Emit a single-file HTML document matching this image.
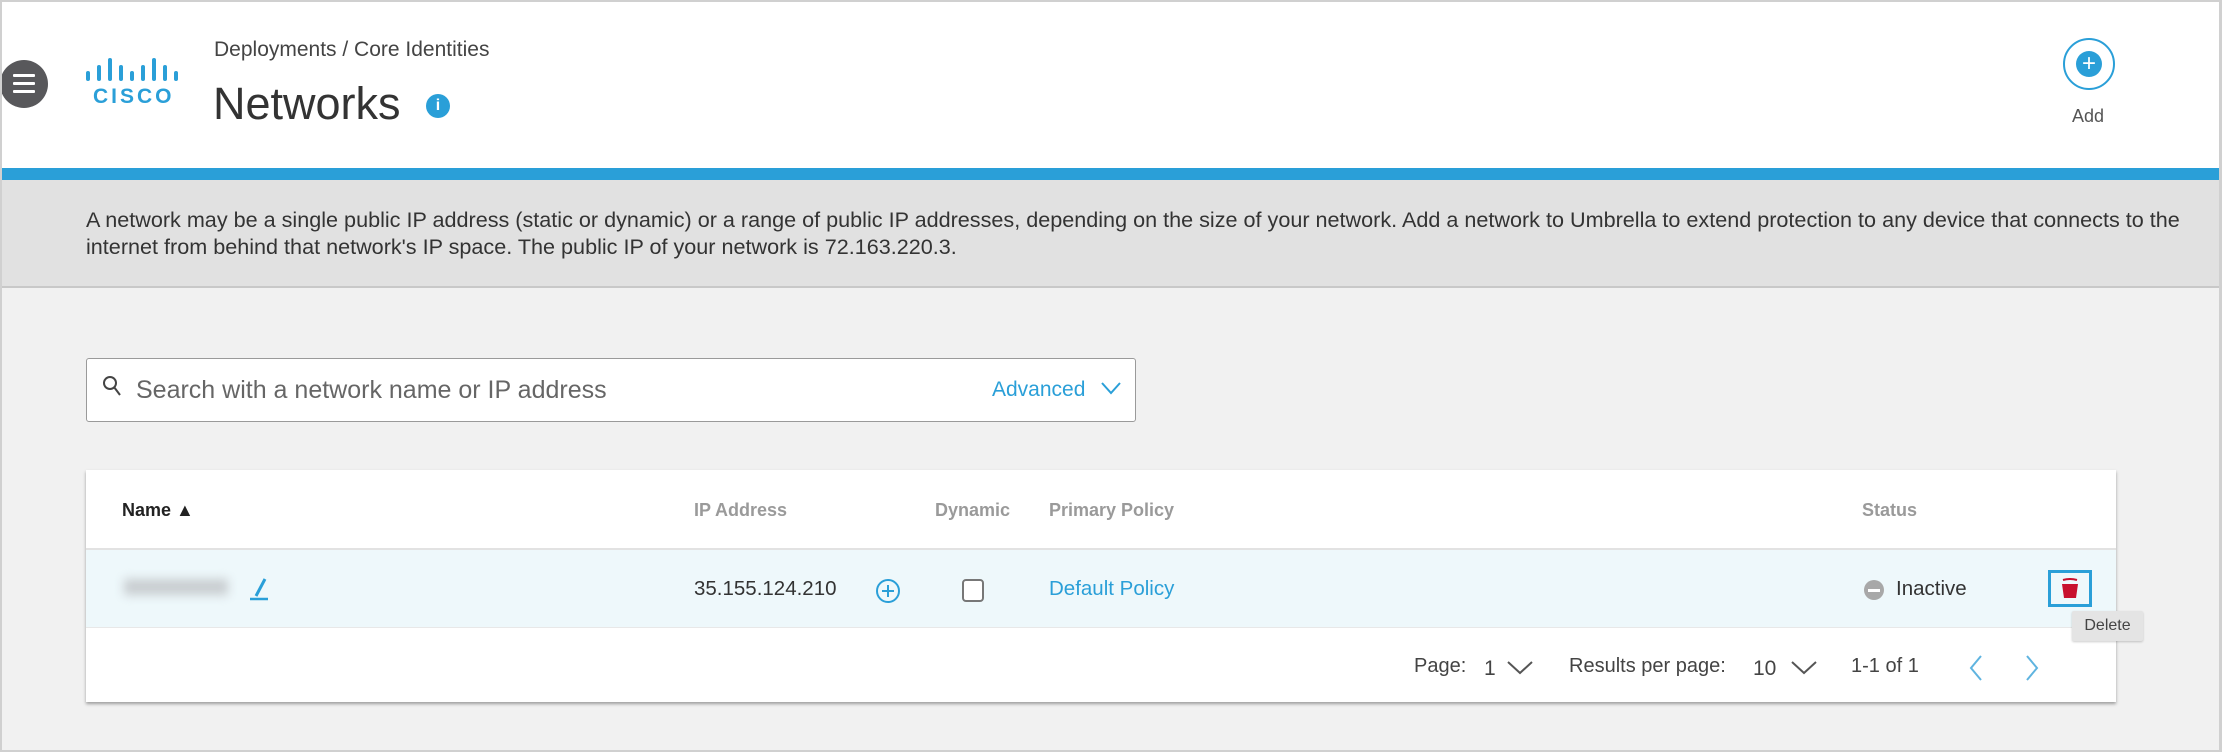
<!DOCTYPE html>
<html><head><meta charset="utf-8"><style>
*{margin:0;padding:0;box-sizing:border-box}
body{width:2222px;height:752px;overflow:hidden;background:#d0d0d0;font-family:"Liberation Sans",Arial,sans-serif;position:relative}
.frame{position:absolute;left:2px;top:2px;width:2217px;height:748px;background:#f1f1f1;overflow:hidden}
.hdr{position:absolute;left:0;top:0;width:100%;height:166px;background:#fff}
.bar{position:absolute;left:0;top:166px;width:100%;height:12px;background:#2a9fd8}
.banner{position:absolute;left:0;top:178px;width:100%;height:108px;background:#e1e1e1;border-bottom:2px solid #c8c8c8}
.banner p{position:absolute;left:84px;top:26px;font-size:21.6px;line-height:27px;color:#333;white-space:nowrap}
.abs{position:absolute}
.th{position:absolute;top:498px;font-size:18px;font-weight:bold;color:#9a9a9a}
.td{position:absolute;top:575px;font-size:20.5px;color:#333}
</style></head><body>
<div class="frame">
<div class="hdr">
 <div class="abs" style="left:-2px;top:58px;width:48px;height:48px;border-radius:50%;background:#58585b"></div>
 <div class="abs" style="left:11px;top:72px;width:22px;height:3px;background:#fff;border-radius:1px"></div>
 <div class="abs" style="left:11px;top:80px;width:22px;height:3px;background:#fff;border-radius:1px"></div>
 <div class="abs" style="left:11px;top:88px;width:22px;height:3px;background:#fff;border-radius:1px"></div>
 <svg class="abs" style="left:82px;top:55px" width="96" height="30" viewBox="0 0 96 30">
  <g stroke="#2a9fd8" stroke-width="4" stroke-linecap="round">
   <line x1="4" y1="16" x2="4" y2="22"/><line x1="15" y1="10" x2="15" y2="22"/><line x1="26" y1="3" x2="26" y2="22"/><line x1="37" y1="10" x2="37" y2="22"/><line x1="48" y1="16" x2="48" y2="22"/><line x1="59" y1="10" x2="59" y2="22"/><line x1="70" y1="3" x2="70" y2="22"/><line x1="81" y1="10" x2="81" y2="22"/><line x1="92" y1="16" x2="92" y2="22"/>
  </g></svg>
 <div class="abs" style="left:91px;top:83px;font-size:21px;font-weight:bold;color:#2a9fd8;letter-spacing:3px">CISCO</div>
 <div class="abs" style="left:212px;top:36px;font-size:21px;color:#444">Deployments / Core Identities</div>
 <div class="abs" style="left:211px;top:76px;font-size:45px;font-weight:300;color:#333">Networks</div>
 <div class="abs" style="left:424px;top:92px;width:24px;height:24px;border-radius:50%;background:#2a9fd8;color:#fff;font-size:16px;font-weight:bold;text-align:center;line-height:24px">i</div>
 <div class="abs" style="left:2061px;top:36px;width:52px;height:52px;border-radius:50%;border:2px solid #2a9fd8"></div>
 <div class="abs" style="left:2074px;top:49px;width:26px;height:26px;border-radius:50%;background:#2a9fd8;color:#fff;font-size:24px;text-align:center;line-height:25px">+</div>
 <div class="abs" style="left:2070px;top:104px;font-size:18px;color:#555">Add</div>
</div>
<div class="bar"></div>
<div class="banner"><p>A network may be a single public IP address (static or dynamic) or a range of public IP addresses, depending on the size of your network. Add a network to Umbrella to extend protection to any device that connects to the<br>internet from behind that network's IP space. The public IP of your network is 72.163.220.3.</p></div>

<div class="abs" style="left:84px;top:356px;width:1050px;height:64px;background:#fff;border:1.5px solid #9a9a9a;border-radius:3px"></div>
<svg class="abs" style="left:100px;top:373px" width="20" height="22"><circle cx="8" cy="8" r="6" fill="none" stroke="#444" stroke-width="2"/><line x1="12" y1="12" x2="18" y2="20" stroke="#444" stroke-width="2"/></svg>
<div class="abs" style="left:134px;top:374px;font-size:25px;color:#666">Search with a network name or IP address</div>
<div class="abs" style="left:990px;top:376px;font-size:21px;color:#2a9fd8">Advanced</div>
<svg class="abs" style="left:1098px;top:378px" width="22" height="16"><polyline points="2,3 11,13 20,3" fill="none" stroke="#2a9fd8" stroke-width="2"/></svg>

<div class="abs" style="left:84px;top:468px;width:2030px;height:232px;background:#fff;box-shadow:0 2px 3px rgba(0,0,0,.35)"></div>
<div class="abs" style="left:84px;top:546px;width:2030px;height:80px;background:#eef8fb;border-top:2px solid #e2e2e2;border-bottom:1px solid #e8e8e8"></div>
<div class="th" style="left:120px;color:#222">Name ▲</div>
<div class="th" style="left:692px">IP Address</div>
<div class="th" style="left:933px">Dynamic</div>
<div class="th" style="left:1047px">Primary Policy</div>
<div class="th" style="left:1860px">Status</div>
<div class="abs" style="left:122px;top:577px;width:104px;height:16px;background:#c8cdd0;filter:blur(5px)"></div>
<svg class="abs" style="left:246px;top:574px" width="22" height="26"><line x1="17" y1="3" x2="8" y2="20" stroke="#2a9fd8" stroke-width="3"/><line x1="2" y1="23" x2="20" y2="23" stroke="#2a9fd8" stroke-width="2.5"/></svg>
<div class="td" style="left:692px">35.155.124.210</div>
<svg class="abs" style="left:872px;top:575px" width="28" height="28"><circle cx="14" cy="14" r="11" fill="none" stroke="#2a9fd8" stroke-width="2"/><path d="M14 8v12M8 14h12" stroke="#2a9fd8" stroke-width="2"/></svg>
<div class="abs" style="left:960px;top:577px;width:22px;height:23px;border:2.5px solid #777;border-radius:4px;background:#fff"></div>
<div class="td" style="left:1047px;color:#2a9fd8">Default Policy</div>
<div class="abs" style="left:1862px;top:578px;width:20px;height:20px;border-radius:50%;background:#a8a8a8"></div>
<div class="abs" style="left:1866px;top:587px;width:12px;height:3px;background:#fff"></div>
<div class="td" style="left:1894px">Inactive</div>
<div class="abs" style="left:2046px;top:568px;width:44px;height:37px;border:3px solid #2a9fd8"></div>
<svg class="abs" style="left:2058px;top:576px" width="20" height="22"><path d="M3 2 Q10 0 17 2" stroke="#c8102e" stroke-width="2" fill="none"/><path d="M2 6h16l-2 14H4z" fill="#c8102e"/></svg>
<div class="abs" style="left:2070px;top:609px;width:71px;height:30px;background:#e4e4e4;border-radius:2px;box-shadow:0 1px 2px rgba(0,0,0,.2);font-size:16px;color:#444;text-align:center;line-height:30px">Delete</div>
<div class="abs" style="left:1412px;top:653px;font-size:20px;color:#444">Page:</div>
<div class="abs" style="left:1482px;top:655px;font-size:21px;color:#444">1</div>
<svg class="abs" style="left:1504px;top:658px" width="28" height="16"><polyline points="2,2 14,13 26,2" fill="none" stroke="#555" stroke-width="2"/></svg>
<div class="abs" style="left:1567px;top:653px;font-size:20px;color:#444">Results per page:</div>
<div class="abs" style="left:1751px;top:655px;font-size:21px;color:#444">10</div>
<svg class="abs" style="left:1788px;top:658px" width="28" height="16"><polyline points="2,2 14,13 26,2" fill="none" stroke="#555" stroke-width="2"/></svg>
<div class="abs" style="left:1849px;top:653px;font-size:20px;color:#444">1-1 of 1</div>
<svg class="abs" style="left:1966px;top:652px" width="16" height="28"><polyline points="13,2 3,14 13,26" fill="none" stroke="#5fb4e0" stroke-width="2"/></svg>
<svg class="abs" style="left:2022px;top:652px" width="16" height="28"><polyline points="3,2 13,14 3,26" fill="none" stroke="#5fb4e0" stroke-width="2"/></svg>
</div>
</body></html>
